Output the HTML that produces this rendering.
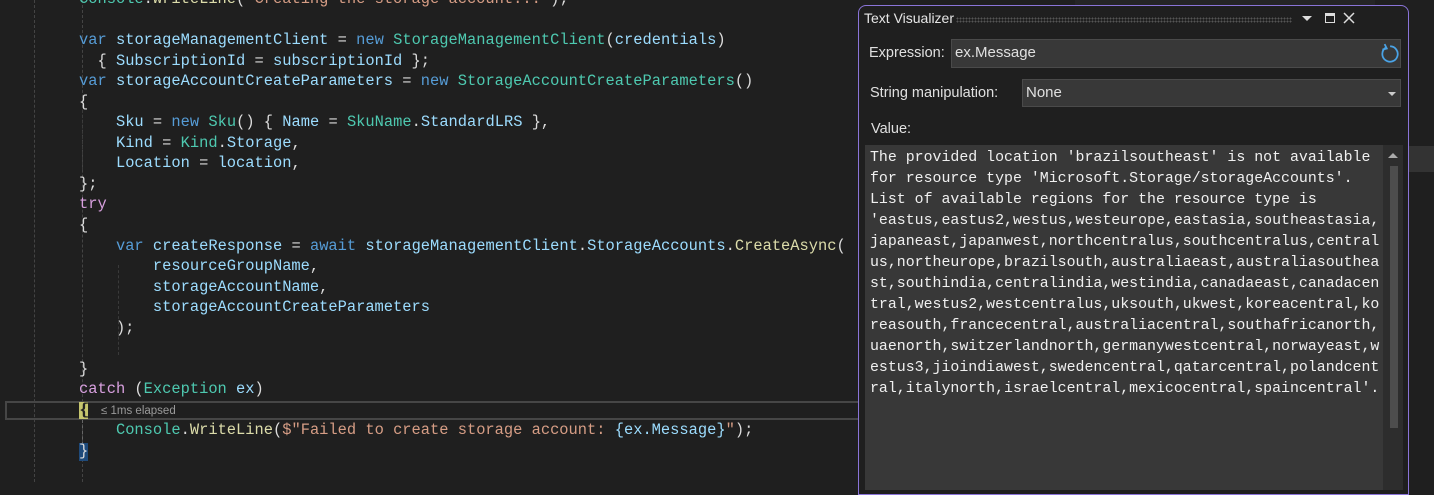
<!DOCTYPE html>
<html><head><meta charset="utf-8"><style>
*{margin:0;padding:0;box-sizing:border-box}
body{width:1434px;height:482px;background:#1f1f1f;overflow:hidden;position:relative;font-family:"Liberation Sans",sans-serif}
.code{position:absolute;left:79px;top:-11px;font-family:"Liberation Mono",monospace;font-size:15.4px;line-height:20.55px;color:#dcdcdc;white-space:pre}
.k{color:#569cd6}.t{color:#4ec9b0}.v{color:#9cdcfe}.m{color:#dcdcaa}.s{color:#d69d85}.c{color:#d8a0df}
.vg{position:absolute;width:0;border-left:1px dashed #555}
.pop{position:absolute;left:858px;top:5px;width:551px;height:490px;background:#1f1f1f;border:1px solid #8a74d8;border-radius:8px 8px 0 0}
.lbl{position:absolute;color:#e0e0e0;font-size:14.5px}
</style></head><body>
<div class="vg" style="left:34px;top:0;height:482px;border-color:#444"></div>
<div class="vg" style="left:82px;top:0;height:482px;border-color:#444"></div>
<div class="vg" style="left:82px;top:110px;height:60px;border-color:#3a3a3a"></div>
<div class="vg" style="left:118px;top:265px;height:90px;border-color:#3a3a3a"></div>
<div class="vg" style="left:82px;top:420px;height:25px;border-color:#666"></div>
<div style="position:absolute;left:5px;top:401px;width:856px;height:19px;border:2px solid #464646;border-right:none"></div>
<div style="position:absolute;left:79px;top:402px;width:9px;height:17px;background:#c5c56e"></div>
<div style="position:absolute;left:79px;top:443px;width:9px;height:18px;background:#1f4a7a"></div>
<div style="position:absolute;left:101px;top:405px;font-size:11.5px;color:#9a9a9a">≤ 1ms elapsed</div>
<div class="code"><span class="t">Console</span>.<span class="m">WriteLine</span>(<span class="s">"Creating the storage account..."</span>);

<span class="k">var</span> <span class="v">storageManagementClient</span> = <span class="k">new</span> <span class="t">StorageManagementClient</span>(<span class="v">credentials</span>)
  { <span class="v">SubscriptionId</span> = <span class="v">subscriptionId</span> };
<span class="k">var</span> <span class="v">storageAccountCreateParameters</span> = <span class="k">new</span> <span class="t">StorageAccountCreateParameters</span>()
{
    <span class="v">Sku</span> = <span class="k">new</span> <span class="t">Sku</span>() { <span class="v">Name</span> = <span class="t">SkuName</span>.<span class="v">StandardLRS</span> },
    <span class="v">Kind</span> = <span class="t">Kind</span>.<span class="v">Storage</span>,
    <span class="v">Location</span> = <span class="v">location</span>,
};
<span class="c">try</span>
{
    <span class="k">var</span> <span class="v">createResponse</span> = <span class="k">await</span> <span class="v">storageManagementClient</span>.<span class="v">StorageAccounts</span>.<span class="m">CreateAsync</span>(
        <span class="v">resourceGroupName</span>,
        <span class="v">storageAccountName</span>,
        <span class="v">storageAccountCreateParameters</span>
    );

}
<span class="c">catch</span> (<span class="t">Exception</span> <span class="v">ex</span>)
<span style="color:#1f1f1f">{</span>
    <span class="t">Console</span>.<span class="m">WriteLine</span>(<span class="s">$"Failed to create storage account: </span><span class="v">{ex.Message}</span><span class="s">"</span>);
<span style="color:#dcdcdc">}</span></div>
<div style="position:absolute;left:80px;top:401px;font-family:'Liberation Mono',monospace;font-size:15.4px;color:#222">{</div>
<div style="position:absolute;left:1400px;top:146px;width:34px;height:26px;background:#333"></div>
<div style="position:absolute;left:1075px;top:0;width:300px;height:6px;background:#252526"></div>
<div class="pop">
 <div style="position:absolute;left:5px;top:4px;color:#e6e6e6;font-size:14px">Text Visualizer</div>
 <div style="position:absolute;left:97px;top:11px;width:336px;height:6px;background-image:radial-gradient(#555 0.8px,transparent 1px);background-size:3px 3px"></div>
 <div style="position:absolute;left:443px;top:10px;width:0;height:0;border-left:5px solid transparent;border-right:5px solid transparent;border-top:5px solid #ddd"></div>
 <div style="position:absolute;left:466px;top:7px;width:10px;height:10px;border:1.5px solid #ddd;border-top-width:3px"></div>
 <svg style="position:absolute;left:484px;top:6px" width="12" height="12"><path d="M1 1L11 11M11 1L1 11" stroke="#ddd" stroke-width="1.5"/></svg>
 <div class="lbl" style="left:10px;top:39px">Expression:</div>
 <div style="position:absolute;left:92px;top:33px;width:450px;height:29px;background:#383838;border:1px solid #4a4a4a"></div>
 <div class="lbl" style="left:96px;top:38px;font-size:15px">ex.Message</div>
 <svg style="position:absolute;left:519px;top:37px" width="22" height="22" viewBox="0 0 20 20"><path d="M7 4.2A7 7 0 1 0 11 3" fill="none" stroke="#4aa3e6" stroke-width="1.6"/><path d="M6 1L8 5L4 6" fill="none" stroke="#4aa3e6" stroke-width="1.6"/></svg>
 <div class="lbl" style="left:11px;top:79px">String manipulation:</div>
 <div style="position:absolute;left:163px;top:73px;width:379px;height:28px;background:#383838;border:1px solid #4a4a4a"></div>
 <div class="lbl" style="left:167px;top:78px;font-size:15px">None</div>
 <div style="position:absolute;left:529px;top:86px;border-left:4px solid transparent;border-right:4px solid transparent;border-top:4px solid #ccc"></div>
 <div class="lbl" style="left:12px;top:115px">Value:</div>
 <div style="position:absolute;left:6px;top:139px;width:518px;height:345px;background:#383838"></div>
 <div style="position:absolute;left:524px;top:139px;width:20px;height:345px;background:#2d2d2d"></div>
 <div style="position:absolute;left:529px;top:147px;border-left:5px solid transparent;border-right:5px solid transparent;border-bottom:5px solid #aaa"></div>
 <div style="position:absolute;left:531px;top:160px;width:8px;height:262px;background:#4d4d4d"></div>
 <div style="position:absolute;left:11px;top:142px;font-family:'Liberation Mono',monospace;font-size:14.9px;line-height:21px;color:#f0f0f0;white-space:pre">The provided location 'brazilsoutheast' is not available
for resource type 'Microsoft.Storage/storageAccounts'.
List of available regions for the resource type is
'eastus,eastus2,westus,westeurope,eastasia,southeastasia,
japaneast,japanwest,northcentralus,southcentralus,central
us,northeurope,brazilsouth,australiaeast,australiasouthea
st,southindia,centralindia,westindia,canadaeast,canadacen
tral,westus2,westcentralus,uksouth,ukwest,koreacentral,ko
reasouth,francecentral,australiacentral,southafricanorth,
uaenorth,switzerlandnorth,germanywestcentral,norwayeast,w
estus3,jioindiawest,swedencentral,qatarcentral,polandcent
ral,italynorth,israelcentral,mexicocentral,spaincentral'.</div>
</div>
</body></html>
